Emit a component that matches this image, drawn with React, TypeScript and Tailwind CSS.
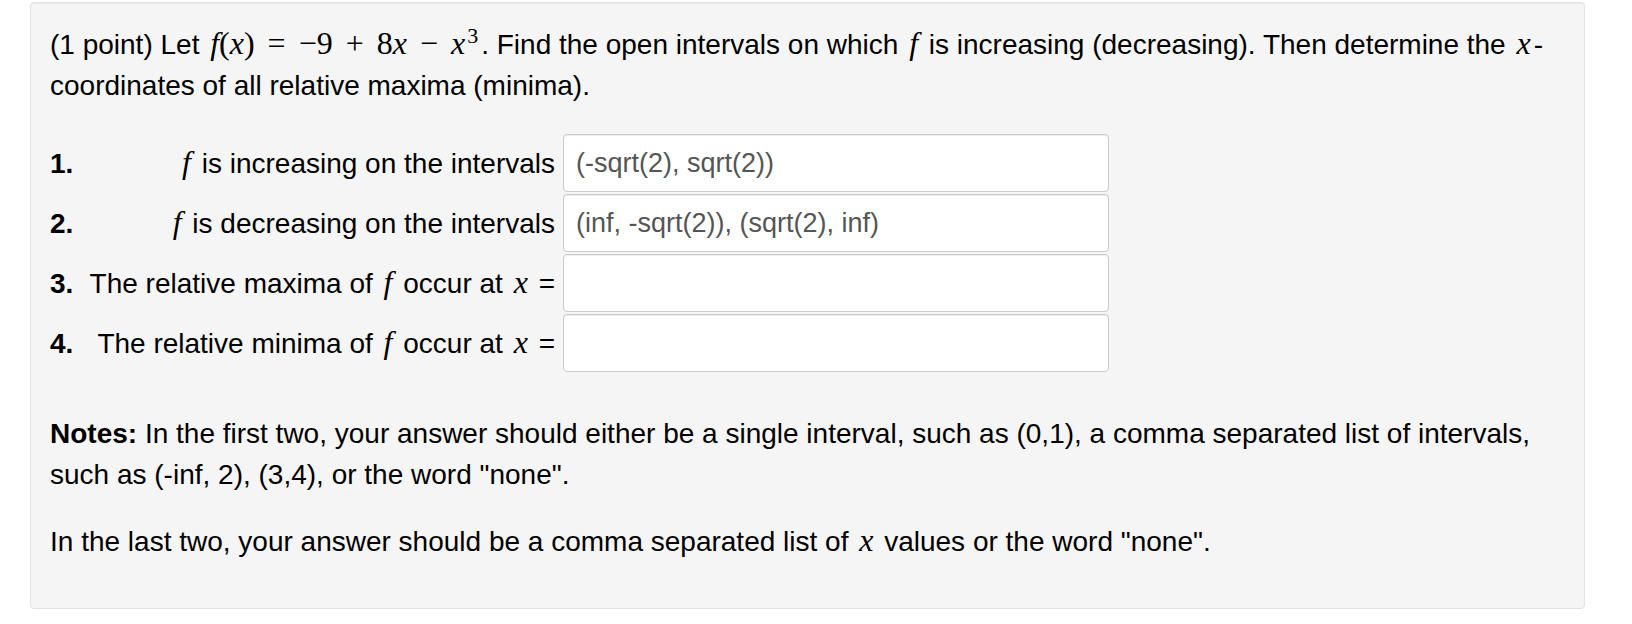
import React from 'react'

const sans = "font-['Liberation_Sans','Helvetica','Arial',sans-serif]"
const serif = "font-['Liberation_Serif','Times_New_Roman',serif]"

function I({ children }: { children: React.ReactNode }) {
  return <span className={`${serif} italic text-[32px]`}>{children}</span>
}

// math variable that sits inside running text (MathJax adds a little room around it)
function V({ children }: { children: React.ReactNode }) {
  return <span className={`${serif} mx-[3px] italic text-[32px]`}>{children}</span>
}

function R({ children }: { children: React.ReactNode }) {
  return <span className={`${serif} text-[32px]`}>{children}</span>
}

function Op({ children }: { children: React.ReactNode }) {
  return <span className={`${serif} mx-[13px] text-[32px]`}>{children}</span>
}

const rows = [
  {
    n: '1.',
    label: (
      <>
        {'\u00a0'}
        <V>f</V> is increasing on the intervals
      </>
    ),
    value: '(-sqrt(2), sqrt(2))',
  },
  {
    n: '2.',
    label: (
      <>
        {'\u00a0'}
        <V>f</V> is decreasing on the intervals
      </>
    ),
    value: '(inf, -sqrt(2)), (sqrt(2), inf)',
  },
  {
    n: '3.',
    label: (
      <>
        The relative maxima of <V>f</V> occur at <V>x</V> =
      </>
    ),
    value: '',
  },
  {
    n: '4.',
    label: (
      <>
        The relative minima of <V>f</V> occur at <V>x</V> =
      </>
    ),
    value: '',
  },
]

export default function App() {
  return (
    <div className="min-h-screen bg-white pt-[2px]">
      <div
        className={`ml-[30px] w-[1555px] rounded-[4px] border border-[#e3e3e3] bg-[#f5f5f5] px-[19px] pt-[20px] pb-[46px] text-[28px] leading-[41px] text-black shadow-[inset_0_1px_1px_rgba(0,0,0,0.05)] ${sans}`}
      >
        <p>
          (1 point) Let <span className="ml-[3px]" />
          <I>f</I>
          <R>(</R>
          <I>x</I>
          <R>)</R>
          <Op>=</Op>
          <R>−9</R>
          <Op>+</Op>
          <R>8</R>
          <I>x</I>
          <Op>−</Op>
          <I>x</I>
          <sup className={`${serif} ml-[2px] text-[22px]`}>3</sup>
          <span className="ml-[3px]">. Find the open intervals on which</span> <V>f</V> is increasing (decreasing).
          Then determine the <V>x</V>-coordinates of all relative maxima (minima).
        </p>

        <div className="mt-[28px] grid grid-cols-[505px_546px] gap-x-[8px] gap-y-[2px]">
          {rows.map((row) => (
            <React.Fragment key={row.n}>
              <div className="flex h-[58px] items-center justify-between whitespace-nowrap">
                <b className="font-bold">{row.n}</b>
                <span>{row.label}</span>
              </div>
              <div className="flex h-[58px] items-center rounded-[4px] border border-[#cccccc] bg-white px-[12px] text-[27px] text-[#555555] shadow-[inset_0_1px_1px_rgba(0,0,0,0.075)]">
                {row.value}
              </div>
            </React.Fragment>
          ))}
        </div>

        <p className="mt-[41px]">
          <b className="font-bold">Notes:</b> In the first two, your answer should either be a single interval, such as
          (0,1), a comma separated list of intervals, such as (-inf, 2), (3,4), or the word "none".
        </p>
        <p className="mt-[25px]">
          In the last two, your answer should be a comma separated list of <V>x</V> values or the word "none".
        </p>
      </div>
    </div>
  )
}
